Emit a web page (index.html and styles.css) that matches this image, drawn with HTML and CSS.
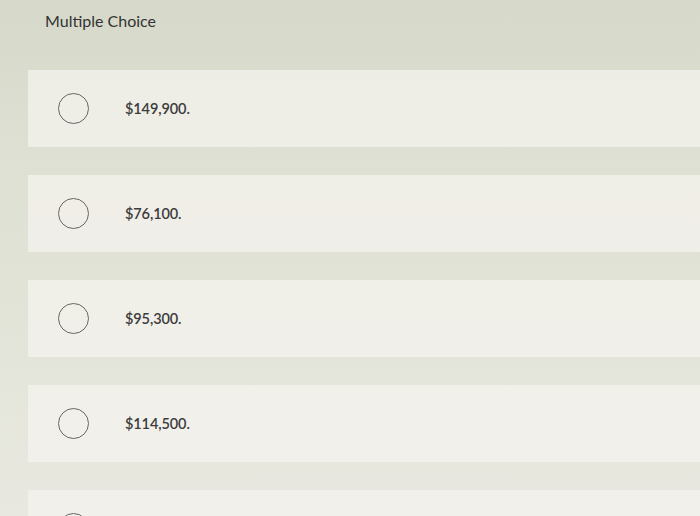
FILE: index.html
```html
<!DOCTYPE html>
<html>
<head>
<meta charset="utf-8">
<link rel="stylesheet" href="styles.css">
</head>
<body>
<div class="page">
  <div class="header"><span class="title">Multiple Choice</span></div>
  <div class="options">
    <div class="option"><span class="radio"></span><span class="label">$149,900.</span></div>
    <div class="option"><span class="radio"></span><span class="label">$76,100.</span></div>
    <div class="option"><span class="radio"></span><span class="label">$95,300.</span></div>
    <div class="option"><span class="radio"></span><span class="label">$114,500.</span></div>
    <div class="option"><span class="radio"></span><span class="label"></span></div>
  </div>
</div>
</body>
</html>
```

FILE: styles.css
```css
html, body {
  margin: 0;
  padding: 0;
}
body {
  width: 700px;
  height: 516px;
  overflow: hidden;
  background: linear-gradient(180deg, #d6d9ca 0%, #dde0d2 30%, #e4e5da 70%, #e8e8e0 100%);
  font-family: Lato, "Open Sans", "Liberation Sans", sans-serif;
  color: #3a3a3a;
}
.page {
  display: flex;
  flex-direction: column;
  height: 516px;
  overflow: hidden;
}
.header {
  height: 70px;
  flex-shrink: 0;
  padding-left: 45px;
  padding-top: 11px;
  box-sizing: border-box;
}
.title {
  font-size: 16px;
  color: #333;
}
.options {
  display: flex;
  flex-direction: column;
  gap: 28px;
  margin-left: 28px;
  flex: 1;
  min-height: 0;
  overflow: hidden;
}
.option {
  height: 77px;
  flex-shrink: 0;
  display: flex;
  align-items: center;
  background: rgba(246, 244, 240, 0.7);
  padding-left: 30px;
}
.radio {
  width: 31px;
  height: 31px;
  border: 1.6px solid #666;
  border-radius: 50%;
  box-sizing: border-box;
  flex-shrink: 0;
}
.label {
  margin-left: 36px;
  font-size: 14.5px;
  font-weight: 600;
  color: #3c3c3c;
  letter-spacing: -0.1px;
}
```
